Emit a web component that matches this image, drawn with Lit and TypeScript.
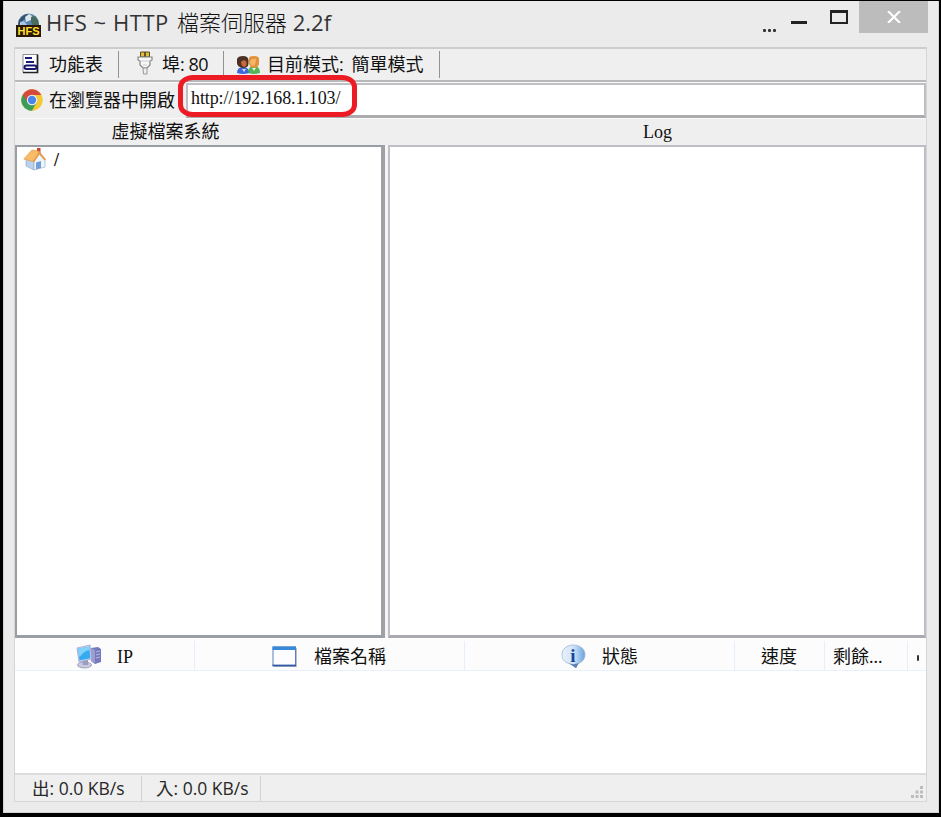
import { LitElement, html, css, svg } from "lit";
import { customElement } from "lit/decorators.js";

const hfsIcon = svg`<svg class="icon" width="26" height="26" viewBox="0 0 26 26">
  <circle cx="12.500" cy="12" r="10.500" fill="#5d88b4"/>
  <path d="M3 8Q7 2 13 2L11 6L7 8L6 12L2 13Z" fill="#33506f"/>
  <path d="M9 5l4-3 3 2-1 4-5 2z" fill="#dbe6ee"/>
  <path d="M15 5l4-1 3 4 1 5-6 1-2-4z" fill="#496d5c"/>
  <path d="M4 10l4-1 3 4H4z" fill="#a9c7e2"/>
  <rect x="0" y="13" width="25" height="12" fill="#2a1607"/>
  <text class="badge" x="1.500" y="23" textLength="22" lengthAdjust="spacingAndGlyphs">HFS</text>
</svg>`;

const menuIcon = svg`<svg class="icon" width="17" height="20" viewBox="0 0 17 20">
  <path d="M1 .5H15.500V18.500H1Z" fill="#fff" stroke="#8b8b91" stroke-width="1"/>
  <path d="M15.500 .5V18.500H1" fill="none" stroke="#222" stroke-width="1.700"/>
  <path d="M3 4H10M4 8H12" stroke="#1b1b78" stroke-width="2"/>
  <rect x="2.500" y="11.500" width="12" height="3.500" rx="1.700" fill="#fff" stroke="#151571" stroke-width="2"/>
</svg>`;

const plugIcon = svg`<svg class="icon" width="16" height="25" viewBox="0 0 16 25">
  <path d="M3.500 1H12.500V6H3.500Z" fill="#e4bd3c" stroke="#5a4c27" stroke-width="1"/>
  <path d="M7 1H9V6H7Z" fill="#65552b"/>
  <path d="M1 6H15V9L13 10V14L10 17H6L3 14V10L1 9Z" fill="#f7f7f7" stroke="#858585" stroke-width="1.200"/>
  <path d="M6 17H10V23H6.500Z" fill="#eee" stroke="#999"/>
  <path d="M4 10H12M6 14H10" stroke="#ccc"/>
</svg>`;

const usersIcon = svg`<svg class="icon" width="25" height="20" viewBox="0 0 25 20">
  <path d="M12 18Q12 11 18 11Q24 11 24 18Q18 20 12 18Z" fill="#54b456"/>
  <path d="M13 3Q13 1 18 1Q23 1 23 4V9Q22 13 18 13Q13 12 13 8Z" fill="#e3923c"/>
  <path d="M14 7Q15 3 20 4Q20 10 17 11Q14 10 14 7Z" fill="#f5b568"/>
  <path d="M1 18Q1 12 7 12Q13 12 13 18Q7 20 1 18Z" fill="#3f67d8"/>
  <path d="M1 4Q2 1 7 1Q12 1 12.500 5V9Q12 13 7 13Q1 12 1 8Z" fill="#4b3024"/>
  <path d="M5 7Q7 4 10 6Q12 11 8 12Q5 11 5 7Z" fill="#c8693a"/>
  <path d="M6 14l2 3 2-3z" fill="#cbdcff"/><path d="M16 13l2 3 2-3z" fill="#d5ffd5"/>
</svg>`;

const chromeIcon = svg`<svg class="icon" width="22" height="22" viewBox="0 0 22 22">
  <circle cx="11" cy="11" r="10.700" fill="#f5c934"/>
  <path d="M11 11L1.900 5.400A10.700 10.700 0 0 0 11 21.700L15.500 13.500Z" fill="#3c9d57"/>
  <path d="M1.900 5.400A10.700 10.700 0 0 1 20.400 6H11V11L6.600 13.500Z" fill="#d7493b"/>
  <circle cx="11" cy="11" r="5.200" fill="#f5f5f5"/><circle cx="11" cy="11" r="4.200" fill="#4986ec"/>
</svg>`;

const homeIcon = svg`<svg class="icon" width="24" height="24" viewBox="0 0 24 24">
  <path d="M3 11L11 14V23L3 19Z" fill="#b9d3ee" stroke="#94aec9" stroke-width=".7"/>
  <path d="M11 14L17 6L22 12V20L11 23Z" fill="#edf5fc" stroke="#9cb3cc" stroke-width=".7"/>
  <path d="M13 15.500L18 14V21L13 22.500Z" fill="#6f9fd6"/>
  <path d="M14 1H17.500V7H14Z" fill="#c9452c"/>
  <path d="M.800 12L9 3L16.500 4.500L10 14.500Z" fill="#f9bb67" stroke="#e29a43" stroke-width=".7"/>
  <path d="M16.500 4.500L23 12.500L21.500 13.500L16.300 7.500L11 15.500L10 14.500Z" fill="#e59b49"/>
</svg>`;

const computerIcon = svg`<svg class="icon" width="26" height="25" viewBox="0 0 26 25">
  <path d="M15 4L22 3L25 5V18L19 20L15 17Z" fill="#7479bd"/>
  <path d="M15 4L19 6V20L15 17Z" fill="#9a9dce"/>
  <path d="M20 8L24 7M20 11L24 10M20 14L24 13" stroke="#b5b8df"/>
  <ellipse cx="8.500" cy="21" rx="7" ry="3" fill="#c9cae0" stroke="#9294b3" stroke-width=".8"/>
  <path d="M6 16L12 15V21L7 21Z" fill="#9b9ebf"/>
  <path d="M1 4L14 1L15.500 15L3 18Z" fill="#d5d7ee" stroke="#9da2d0" stroke-width=".8"/>
  <path d="M2 4.800L13.300 2.500L14.300 14.300L3.500 16.500Z" fill="#35aaf0"/>
  <path d="M2 4.800L13.300 2.500L13.600 6Q8 7 3.500 13Z" fill="#82d3fb"/>
</svg>`;

const windowIcon = svg`<svg class="icon" width="25" height="21" viewBox="0 0 25 21">
  <path d="M2 2H25V21H2Z" fill="#bdbdc4"/>
  <rect x="1" y="1" width="22.500" height="18.500" fill="#fdfdff" stroke="#5980c7" stroke-width="1"/>
  <path d="M.5 .5H24V4H.5Z" fill="#3889d8"/><path d="M.5 19.500H24" stroke="#3259a8" stroke-width="1.800"/>
</svg>`;

const infoIcon = svg`<svg class="icon" width="25" height="25" viewBox="0 0 25 25">
  <defs><linearGradient id="bubble" x1="0" x2="1"><stop offset="0" stop-color="#e8f2fd"/><stop offset=".5" stop-color="#cfe4fa"/><stop offset="1" stop-color="#6ba2dc"/></linearGradient></defs>
  <path d="M12 1C19 1 24 5 24 10.500C24 16 20 19 16 20L15 24L10 20C4 19 1 16 1 10.500C1 5 6 1 12 1Z" fill="url(#bubble)" stroke="#9eb6d3" stroke-width=".8"/>
  <path d="M8 19.500Q13 21 18 19L15 24Z" fill="#5b83b5"/>
  <text class="info" x="12" y="17.500" text-anchor="middle">i</text>
</svg>`;

@customElement("app-root")
export class AppRoot extends LitElement {
  static styles = css`
    :host { display: block; width: 941px; height: 817px; background: #000; overflow: hidden; position: relative;
      font: 18px/24px "Liberation Serif", "Noto Sans CJK TC", sans-serif; color: #111; }
    * { box-sizing: border-box; }
    .icon { display: block; flex: none; overflow: visible; }
    .badge { font: bold 11.500px "Liberation Sans", sans-serif; fill: #ffe32e; }
    .info { font: bold 19px "Liberation Serif", serif; fill: #1b459e; }
    .row { display: flex; align-items: flex-start; white-space: nowrap; }
    .window { width: 936px; height: 812px; margin: 0 0 0 3px; background: #ebebeb; border: 1px solid #d6d3d6; border-width: 0 1px 1px 1px; }
    .frame { padding-top: 1px; }
    .title { height: 46px; padding-left: 12px; }
    .title .icon { margin-top: 11px; }
    .caption { font: 300 22px/30px "Open Sans", "Noto Sans CJK TC", sans-serif; margin: 6px 0 0 4px; color: #111; width: 715px; }
    .roman { display: inline-block; font-weight: 400; color: #333; }
    .name { width: 131px; letter-spacing: .55px; }
    .dots { display: flex; gap: 2px; margin-top: 28px; width: 30px; padding-left: 2px; }
    .dots i { width: 3px; height: 3px; background: #333; border-radius: 1px; }
    .min { width: 16px; height: 3px; background: #222; margin-top: 20px; }
    .max { width: 18px; height: 14px; border: 2px solid #222; border-top-width: 3px; margin: 9px 0 0 23px; }
    .close { width: 69px; height: 32px; background: #bcbcbc; margin-left: 11px; display: flex; align-items: center; justify-content: center; }
    .client { width: 913px; margin-left: 10px; border: 1px solid #d5d5d5; border-top: 0; background: #efefef; height: 755px; }
    .tools { height: 35px; border-top: 2px solid #cdcdcd; border-bottom: 2px solid #b9b9bb; }
    .tools { font-family: "Noto Sans CJK TC", sans-serif; }
    .tool { display: flex; height: 27px; margin-top: 2px; border-right: 1px solid #929292; }
    .label { margin-top: 0; }
    .t1 { width: 104px; padding-left: 7px; } .t1 .icon { margin-top: 3px; } .t1 .label { margin-left: 10px; }
    .t2 { width: 105px; padding-left: 18px; } .t2 .icon { margin-top: 0; } .t2 .label { margin-left: 9px; }
    .t3 { width: 216px; padding-left: 12px; } .t3 .icon { margin-top: 4px; } .t3 .label { margin-left: 6px; }
    .latin { font-family: "Open Sans", sans-serif; letter-spacing: -.5px; }
    .address { height: 37px; border-top: 1px solid #fafafa; border-bottom: 1px solid #fafafa; padding-left: 6px; }
    .address > .icon { margin-top: 6px; }
    .open { margin: 4px 0 0 6px; width: 137px; font-family: "Noto Sans CJK TC", sans-serif; }
    .field { flex: 1; height: 35px; border: 2px solid #c0c0c4; border-bottom: 3px solid #acacaf; background: #fff; padding: 1px 3px; letter-spacing: -.1px; }
    .heads { display: grid; grid-template-columns: 370px 1fr; height: 26px; line-height: 26px; text-align: center; }
    .heads .vfs { padding-right: 69px; }
    .heads .log { padding-left: 4px; }
    .panes { display: grid; grid-template-columns: 370px 1fr; gap: 3px; height: 493px; background: #f5f5f5; }
    .pane { background: #fff; border: 2px solid #bebfc6; border-bottom: 3px solid #aaabb0; }
    .tree { border-color: #9a9ea7; border-right: 4px solid #a0a1a4; display: flex; padding: 0 0 0 6px; }
    .slash { margin: 1px 0 0 7px; font-weight: bold; }
    .list { height: 135px; background: #fff; padding-top: 1px; }
    .columns { display: grid; grid-template-columns: 180px 270px 270px 90px 83px 1fr; height: 32px; background: #fcfcfc; border-bottom: 1px solid #e8f1fc; padding-top: 2px; }
    .col { display: flex; border-right: 1px solid #e5effb; white-space: nowrap; line-height: 32px; height: 29px; }
    .col:last-child { border: 0; }
    .c1 { padding-left: 61px; } .c1 .icon { margin: 3px 15px 0 0; }
    .c2 { padding-left: 77px; } .c2 .icon { margin: 5px 17px 0 0; }
    .c3 { padding-left: 96px; } .c3 .icon { margin: 3px 16px 0 0; }
    .c4 { padding-left: 26px; } .c5 { padding-left: 8px; } .c6 { padding: 14px 0 0 9px; }
    .tick { width: 2px; height: 6px; background: #333; border-radius: 1px; }
    .status { height: 29px; border-top: 2px solid #dcdcdc; font: 17.500px/28px "Open Sans", "Noto Sans CJK TC", sans-serif; color: #282828; letter-spacing: 0; border-bottom: 1px solid #d7d7d7; }
    .rate { height: 25px; margin-top: 1px; border-right: 1px solid #d2d2d2; line-height: 24px; }
    .out { width: 127px; padding-left: 17px; } .in { width: 119px; padding-left: 14px; }
    .grip { margin: 11px 2px 0 auto; }
    .ring { position: absolute; left: 178px; top: 75px; width: 179px; height: 42px; border: 5px solid #ed1c24; border-radius: 15px / 12px; }
  `;

  render() {
    return html`
      <div class="frame"><div class="window">
        <div class="title row">
          ${hfsIcon}<div class="caption"><span class="roman name">HFS ~ HTTP</span>檔案伺服器 <span class="roman">2.2f</span></div>
          <div class="dots"><i></i><i></i><i></i></div>
          <div class="min"></div><div class="max"></div>
          <div class="close"><svg width="14" height="12" viewBox="0 0 14 12"><path d="M1 0L13 12M13 0L1 12" stroke="#fff" stroke-width="2.200"/></svg></div>
        </div>
        <div class="client">
          <div class="tools row">
            <div class="tool t1">${menuIcon}<span class="label">功能表</span></div>
            <div class="tool t2">${plugIcon}<span class="label">埠<span class="latin">: 80</span></span></div>
            <div class="tool t3">${usersIcon}<span class="label">目前模式<span class="latin">:&nbsp; </span>簡單模式</span></div>
          </div>
          <div class="address row">${chromeIcon}<span class="open">在瀏覽器中開啟</span><div class="field">http://192.168.1.103/</div></div>
          <div class="heads"><div class="vfs">虛擬檔案系統</div><div class="log">Log</div></div>
          <div class="panes">
            <div class="pane tree">${homeIcon}<span class="slash">/</span></div>
            <div class="pane"></div>
          </div>
          <div class="list">
            <div class="columns">
              <div class="col c1">${computerIcon}IP</div>
              <div class="col c2">${windowIcon}檔案名稱</div>
              <div class="col c3">${infoIcon}狀態</div>
              <div class="col c4">速度</div>
              <div class="col c5">剩餘...</div>
              <div class="col c6"><div class="tick"></div></div>
            </div>
          </div>
          <div class="status row">
            <div class="rate out">出: 0.0 KB/s</div><div class="rate in">入: 0.0 KB/s</div>
            <svg class="grip" width="13" height="13" viewBox="0 0 13 13" fill="#bdbdbd"><path d="M9 0h3v3H9zM4.500 4.500h3v3h-3zM9 4.500h3v3H9zM0 9h3v3H0zM4.500 9h3v3h-3zM9 9h3v3H9z"/></svg>
          </div>
        </div>
      </div></div>
      <div class="ring"></div>
    `;
  }
}
